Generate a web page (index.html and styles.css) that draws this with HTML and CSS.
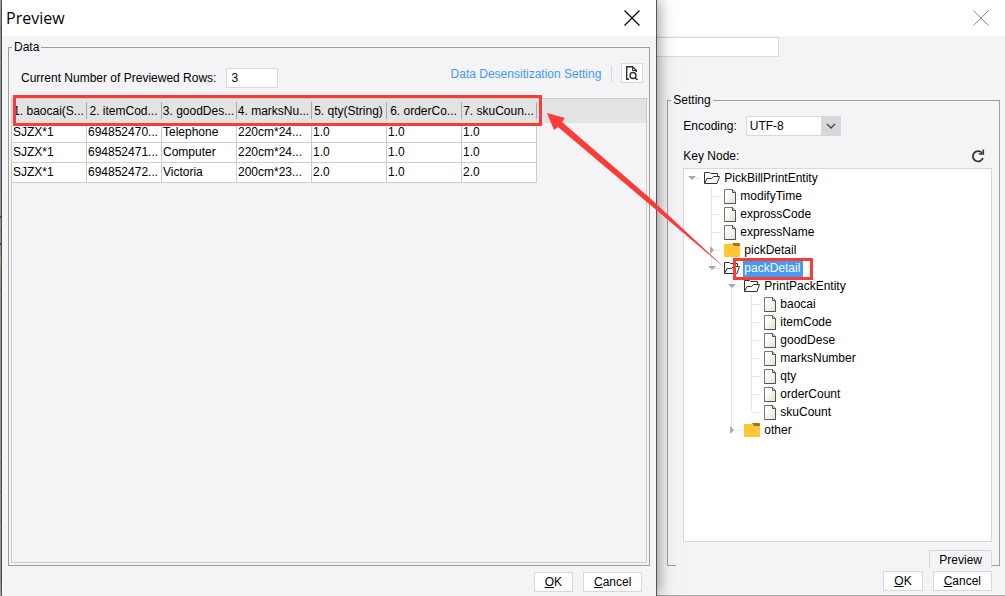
FILE: index.html
```
<!DOCTYPE html>
<html lang="en">

<head>
    <meta charset="utf-8">
    <title>Preview</title>
    <link rel="stylesheet" href="styles.css">
</head>

<body>
    <!-- icon shapes used by the tree -->
    <svg class="defs" width="0" height="0" aria-hidden="true">
        <defs>
            <linearGradient id="paper" x1="0" y1="0" x2="1" y2="1">
                <stop offset="0.3" stop-color="#ffffff" />
                <stop offset="1" stop-color="#e0e0cc" />
            </linearGradient>
            <symbol id="icon-file" viewBox="0 0 12 15">
                <path d="M0.5 0.5H8.5L11.5 3.5V14.5H0.5Z" fill="url(#paper)" stroke="#777" />
                <path d="M8.5 0.5V3.5H11.5" fill="none" stroke="#555" />
                <path d="M0.5 14.5H11.5V3.5" fill="none" stroke="#555" />
            </symbol>
            <symbol id="icon-open" viewBox="0 0 16 12">
                <path d="M0.5 11.5V0.5H5.5L6.5 1.5H13.5V4" fill="none" stroke="#333" />
                <path d="M0.5 11.5L3 6.5H7.5L9.5 4.5H15.5L13 11.5Z" fill="#fff" stroke="#333" />
            </symbol>
            <symbol id="icon-closed" viewBox="0 0 16 14">
                <path d="M8 0H15Q16 0 16 1V4H10Z" fill="#a87414" />
                <path d="M1 1H8L10 3H16V13Q16 14 15 14H1Q0 14 0 13V2Q0 1 1 1Z" fill="#ffc736" />
            </symbol>
        </defs>
    </svg>

    <div class="sheet-edge"></div>

    <section class="dialog dialog-front">
        <header class="titlebar">
            <h1>Preview</h1>
            <button class="btn-close" aria-label="Close">
                <svg width="16" height="16" viewBox="0 0 16 16"><path d="M0.5 0.5L15.5 15.5M15.5 0.5L0.5 15.5" fill="none" stroke="#000" stroke-width="1.2" /></svg>
            </button>
        </header>
        <fieldset class="group group-data">
            <legend>Data</legend>
            <div class="toolbar">
                <label for="row_count">Current Number of Previewed Rows:</label>
                <input id="row_count" class="text-input row-count" type="text" value="3">
                <a class="link" href="#">Data Desensitization Setting</a>
                <span class="separator"></span>
                <button class="btn-icon" aria-label="Preview data">
                    <svg width="14" height="16" viewBox="0 0 14 16">
                        <path d="M4 14.3H1.7V1.7H7.5L11.3 5.5V7" fill="none" stroke="#333" stroke-width="1.4" />
                        <path d="M7.5 1.7V5.5H11.3" fill="none" stroke="#333" />
                        <circle cx="8" cy="10.5" r="3" fill="none" stroke="#333" stroke-width="1.4" />
                        <path d="M10 12.5L12.5 15" stroke="#333" stroke-width="1.4" />
                    </svg>
                </button>
            </div>
            <div class="table-panel">
                <table class="data-table">
                    <thead>
                        <tr>
                            <th>1. baocai(S...</th>
                            <th>2. itemCod...</th>
                            <th>3. goodDes...</th>
                            <th>4. marksNu...</th>
                            <th>5. qty(String)</th>
                            <th>6. orderCo...</th>
                            <th>7. skuCoun...</th>
                        </tr>
                    </thead>
                    <tbody>
                        <tr>
                            <td>SJZX*1</td>
                            <td>694852470...</td>
                            <td>Telephone</td>
                            <td>220cm*24...</td>
                            <td>1.0</td>
                            <td>1.0</td>
                            <td>1.0</td>
                        </tr>
                        <tr>
                            <td>SJZX*1</td>
                            <td>694852471...</td>
                            <td>Computer</td>
                            <td>220cm*24...</td>
                            <td>1.0</td>
                            <td>1.0</td>
                            <td>1.0</td>
                        </tr>
                        <tr>
                            <td>SJZX*1</td>
                            <td>694852472...</td>
                            <td>Victoria</td>
                            <td>200cm*23...</td>
                            <td>2.0</td>
                            <td>1.0</td>
                            <td>2.0</td>
                        </tr>
                    </tbody>
                </table>
                <div class="mark mark-header"></div>
            </div>
        </fieldset>
        <footer class="buttons">
            <button class="btn"><u>O</u>K</button>
            <button class="btn"><u>C</u>ancel</button>
        </footer>
    </section>

    <section class="dialog dialog-back">
        <header class="titlebar">
            <button class="btn-close" aria-label="Close">
                <svg width="16" height="16" viewBox="0 0 16 16"><path d="M0.5 0.5L15.5 15.5M15.5 0.5L0.5 15.5" fill="none" stroke="#888" /></svg>
            </button>
        </header>
        <input class="text-input name-input" type="text" aria-label="Name">
        <fieldset class="group group-setting">
            <legend>Setting</legend>
            <div class="field">
                <label for="encoding">Encoding:</label>
                <span class="select">
                    <select id="encoding">
                        <option>UTF-8</option>
                    </select>
                    <svg width="10" height="6" viewBox="0 0 10 6"><path d="M1 1L5 5L9 1" fill="none" stroke="#444" stroke-width="1.3" /></svg>
                </span>
            </div>
            <div class="key-node">
                <span>Key Node:</span>
                <button class="btn-refresh" aria-label="Refresh">
                    <svg width="14" height="14" viewBox="0 0 14 14">
                        <path d="M11 3.8A5.2 5.2 0 1 0 12 9" fill="none" stroke="#333" stroke-width="1.8" />
                        <path d="M12.3 0.5V5H7.8" fill="none" stroke="#333" stroke-width="1.6" />
                    </svg>
                </button>
            </div>
            <ul class="tree">
                <li>
                    <div class="node"><span class="toggle open"></span><svg class="folder" width="16" height="12"><use href="#icon-open" /></svg><span class="name">PickBillPrintEntity</span></div>
                    <ul>
                        <li><div class="node"><span class="toggle"></span><svg class="file" width="12" height="15"><use href="#icon-file" /></svg><span class="name">modifyTime</span></div></li>
                        <li><div class="node"><span class="toggle"></span><svg class="file" width="12" height="15"><use href="#icon-file" /></svg><span class="name">exprossCode</span></div></li>
                        <li><div class="node"><span class="toggle"></span><svg class="file" width="12" height="15"><use href="#icon-file" /></svg><span class="name">expressName</span></div></li>
                        <li><div class="node"><span class="toggle closed"></span><svg class="folder" width="16" height="14"><use href="#icon-closed" /></svg><span class="name">pickDetail</span></div></li>
                        <li>
                            <div class="node"><span class="toggle open"></span><svg class="folder" width="16" height="12"><use href="#icon-open" /></svg><span class="name selected">packDetail<span class="mark mark-node"></span></span></div>
                            <ul>
                                <li>
                                    <div class="node"><span class="toggle open"></span><svg class="folder" width="16" height="12"><use href="#icon-open" /></svg><span class="name">PrintPackEntity</span></div>
                                    <ul>
                                        <li><div class="node"><span class="toggle"></span><svg class="file" width="12" height="15"><use href="#icon-file" /></svg><span class="name">baocai</span></div></li>
                                        <li><div class="node"><span class="toggle"></span><svg class="file" width="12" height="15"><use href="#icon-file" /></svg><span class="name">itemCode</span></div></li>
                                        <li><div class="node"><span class="toggle"></span><svg class="file" width="12" height="15"><use href="#icon-file" /></svg><span class="name">goodDese</span></div></li>
                                        <li><div class="node"><span class="toggle"></span><svg class="file" width="12" height="15"><use href="#icon-file" /></svg><span class="name">marksNumber</span></div></li>
                                        <li><div class="node"><span class="toggle"></span><svg class="file" width="12" height="15"><use href="#icon-file" /></svg><span class="name">qty</span></div></li>
                                        <li><div class="node"><span class="toggle"></span><svg class="file" width="12" height="15"><use href="#icon-file" /></svg><span class="name">orderCount</span></div></li>
                                        <li><div class="node"><span class="toggle"></span><svg class="file" width="12" height="15"><use href="#icon-file" /></svg><span class="name">skuCount</span></div></li>
                                    </ul>
                                </li>
                                <li><div class="node"><span class="toggle closed"></span><svg class="folder" width="16" height="14"><use href="#icon-closed" /></svg><span class="name">other</span></div></li>
                            </ul>
                        </li>
                    </ul>
                </li>
            </ul>
            <div class="preview-row">
                <button class="btn btn-preview">Preview</button>
            </div>
        </fieldset>
        <footer class="buttons">
            <button class="btn"><u>O</u>K</button>
            <button class="btn"><u>C</u>ancel</button>
        </footer>
    </section>

    <!-- arrow from the packDetail node to the table header -->
    <svg class="arrow" width="180" height="157" viewBox="0 0 180 157" aria-hidden="true">
        <path d="M0 0L18 5L15 9L104 86L179 156L101 90L11 14L7 17Z" fill="#fc3a38" />
    </svg>
</body>

</html>
```
FILE: styles.css
```
* {
    box-sizing: border-box;
}

body {
    position: relative;
    display: flex;
    min-height: 100vh;
    margin: 0;
    overflow: hidden;
    background-color: #f4f4f7;
    color: #000;
    font-size: 12px;
    line-height: 14px;
    font-family: "Liberation Sans", Arial, sans-serif;
}

button,
input,
select {
    margin: 0;
    font: inherit;
    color: inherit;
}

.defs {
    position: absolute;
}

/* Strip of the window behind the dialogs */

.sheet-edge {
    width: 2px;
    border-right: 1px solid #666;
    background: linear-gradient(#a8c8d4, #a8c8d4) 0 194px / 100% 22px no-repeat, linear-gradient(#1c62c4, #1c62c4) 0 216px / 100% 2px no-repeat, linear-gradient(#1c62c4, #1c62c4) 0 243px / 100% 2px no-repeat, linear-gradient(#d8d48c, #d8d48c) 0 257px / 100% 9px no-repeat, repeating-linear-gradient(#bbb 0, #bbb 27px, #888 28px, #bbb 29px);
}

/* Dialogs */

.dialog {
    display: flex;
    flex-direction: column;
    min-width: 0;
    background-color: #f4f4f7;
}

.dialog-front {
    position: relative;
    z-index: 1;
    flex: 655 1 0;
    border-right: 1px solid #555;
    box-shadow: 0 0 16px rgba(0, 0, 0, 0.5);
}

.dialog-back {
    flex: 348 1 0;
    border-bottom: 1px solid #aaa;
}

.titlebar {
    display: flex;
    align-items: center;
    height: 36px;
    padding: 0 16px 0 4px;
    background-color: #fff;
}

.titlebar h1 {
    margin: 0;
    font-size: 16px;
    font-weight: normal;
    font-family: "Open Sans", "Segoe UI", sans-serif;
}

.btn-close {
    display: flex;
    margin-left: auto;
    padding: 0;
    border: none;
    background: none;
}

.group {
    display: flex;
    flex-direction: column;
    flex: 1;
    min-width: 0;
    margin: 0;
    padding: 0;
    border: 1px solid #a0a090;
}

.group legend {
    margin-left: 3px;
    padding: 0 2px;
}

/* Front dialog */

.group-data {
    margin: 4px 6px 0 6px;
    padding: 0 2px 2px 2px;
}

.group-data legend {
    margin-left: 1px;
}

.toolbar {
    display: flex;
    align-items: center;
    height: 44px;
    padding: 4px 4px 0 10px;
}

.text-input {
    height: 20px;
    padding: 0 4px;
    border: 1px solid #d7d8dc;
    background-color: #fff;
}

.row-count {
    width: 52px;
    margin-left: 10px;
}

.link {
    margin-left: auto;
    margin-bottom: 8px;
    color: #4499f5;
    text-decoration: none;
}

.separator {
    width: 1px;
    height: 16px;
    margin: 0 9px 8px 10px;
    background-color: #d7d8dc;
}

.btn-icon {
    display: flex;
    align-items: center;
    justify-content: center;
    width: 22px;
    height: 20px;
    margin-bottom: 10px;
    padding: 0;
    border: 1px solid #d7d8dc;
    background-color: #fff;
}

.table-panel {
    position: relative;
    flex: 1;
    border: 1px solid #ccc;
    background: linear-gradient(#e3e3e3, #e3e3e3) 0 0 / 100% 24px no-repeat;
}

.data-table {
    width: 525px;
    table-layout: fixed;
    border-collapse: separate;
    border-spacing: 0;
}

.data-table th,
.data-table td {
    padding: 0 0 2px 1px;
    white-space: nowrap;
    overflow: hidden;
}

.data-table th {
    height: 24px;
    padding: 0 2px 0 0;
    font-weight: normal;
    text-align: center;
    background: linear-gradient(#aaa, #aaa) 100% 3px / 1px 17px no-repeat;
}

.data-table td {
    height: 20px;
    border-right: 1px solid #ccc;
    border-bottom: 1px solid #ccc;
    background-color: #fff;
}

.buttons {
    display: flex;
    justify-content: flex-end;
    gap: 10px;
    padding: 6px 14px 4px 0;
}

.btn {
    height: 20px;
    padding: 0 9px;
    border: 1px solid #d7d8dc;
    background-color: #fff;
}

/* Back dialog */

.name-input {
    width: 35%;
    margin-top: 1px;
    border-left: none;
}

.group-setting {
    margin: 36px 5px 0 10px;
    padding: 0 7px 0 15px;
    border-bottom: none;
    background: linear-gradient(#a0a090, #a0a090) 0 100% / 8px 1px no-repeat, linear-gradient(#a0a090, #a0a090) 100% 100% / 7px 1px no-repeat;
}

.group-setting legend {
    margin-left: -12px;
}

.field {
    display: flex;
    align-items: center;
    gap: 9px;
    padding-top: 9px;
}

.select {
    position: relative;
    display: flex;
}

.select select {
    width: 95px;
    height: 20px;
    padding: 0 3px;
    border: 1px solid #d7d8dc;
    border-radius: 0;
    background: linear-gradient(#d7d8dc, #d7d8dc) 100% 0 / 19px 100% no-repeat #fff;
    appearance: none;
}

.select svg {
    position: absolute;
    right: 5px;
    top: 7px;
    pointer-events: none;
}

.key-node {
    display: flex;
    align-items: center;
    justify-content: space-between;
    height: 32px;
    padding: 7px 7px 0 0;
}

.btn-refresh {
    display: flex;
    padding: 0;
    border: none;
    background: none;
}

.tree {
    flex: 1;
    border: 1px solid #d7d8dc;
    background-color: #fff;
}

.tree,
.tree ul {
    margin: 0;
    padding: 0;
    list-style: none;
}

.tree ul {
    padding-left: 20px;
}

/* Connecting lines */

.tree ul > li {
    background: linear-gradient(#e8e8e8, #e8e8e8) 7px 0 / 1px 100% no-repeat;
}

.tree ul > li:last-child {
    background-size: 1px 9px;
}

.node {
    display: flex;
    align-items: center;
    height: 18px;
    background: linear-gradient(#e8e8e8, #e8e8e8) 8px 9px / 9px 1px no-repeat;
}

.toggle {
    display: flex;
    width: 20px;
}

.toggle.open:after {
    content: "";
    margin-left: 4px;
    border: solid transparent;
    border-width: 4px 4px 0 4px;
    border-top-color: #aaa;
}

.toggle.closed:after {
    content: "";
    margin-left: 6px;
    border: solid transparent;
    border-width: 4px 0 4px 4px;
    border-left-color: #aaa;
}

.name {
    margin-left: 3px;
    padding: 1px 3px 2px 1px;
}

.selected {
    position: relative;
    background-color: #4499f5;
    color: #fff;
}

.preview-row {
    display: flex;
    justify-content: flex-end;
    height: 24px;
    padding-top: 8px;
}

.btn-preview {
    height: 18px;
    border-bottom: none;
    background-color: #f4f4f7;
}

.dialog-back .buttons {
    padding: 5px 13px 4px 0;
}

.buttons .btn {
    padding: 0 10px;
}

/* Red annotations */

.mark {
    position: absolute;
    border: 3px solid #fc3a38;
    pointer-events: none;
}

.mark-header {
    top: -4px;
    left: 1px;
    width: 529px;
    height: 31px;
}

.mark-node {
    top: -2px;
    right: -10px;
    bottom: -3px;
    left: -10px;
}

.arrow {
    position: absolute;
    z-index: 2;
    left: 547px;
    top: 113px;
    pointer-events: none;
}
```
